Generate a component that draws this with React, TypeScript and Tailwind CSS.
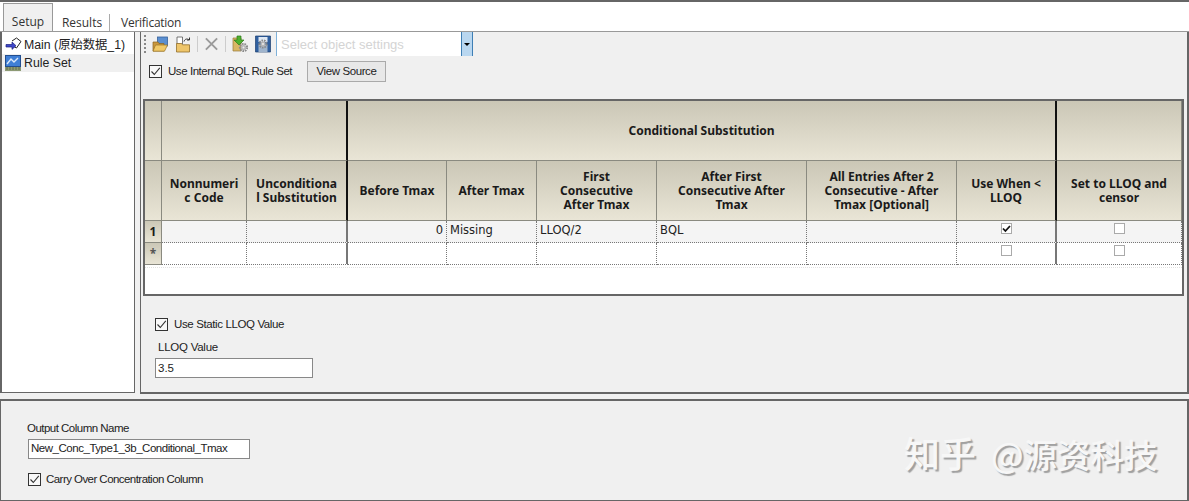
import type { ReactNode } from 'react';

const ui = "font-['Liberation_Sans','Noto_Sans_CJK_SC',sans-serif]";

function Check({ checked = true }: { checked?: boolean }) {
  return (
    <span className="flex h-[13px] w-[13px] shrink-0 items-center justify-center border border-[#333] bg-[#f8f8f8]">
      {checked && (
        <svg width="11" height="11" viewBox="0 0 11 11" fill="none">
          <path d="M1.5 5.5 4.3 8.5 9.8 1.8" stroke="#333" strokeWidth="1.1" />
        </svg>
      )}
    </span>
  );
}

function GridCheck({ checked = false }: { checked?: boolean }) {
  return (
    <span className="flex h-[11px] w-[11px] items-center justify-center border border-[#aaa] bg-white">
      {checked && (
        <svg width="9" height="9" viewBox="0 0 9 9" fill="none">
          <path d="M1 4.5 3.4 7 8 2" stroke="#111" strokeWidth="1.8" />
        </svg>
      )}
    </span>
  );
}

function FolderOpen() {
  return (
    <svg width="16" height="17" viewBox="0 0 16 17">
      <rect x="5.5" y="1" width="10" height="9" fill="#5b8fd0" stroke="#35609c" strokeWidth="0.8" />
      <path d="M1 6h5l1 1.5h5V15H1z" fill="#c9973f" stroke="#8a6420" strokeWidth="0.7" />
      <path d="M3.5 9H15.5l-3 6.2H1z" fill="#f0c968" stroke="#9a7226" strokeWidth="0.7" />
    </svg>
  );
}

function CopyFolder() {
  return (
    <svg width="16" height="17" viewBox="0 0 16 17">
      <path d="M2 1h5.5v7H2z" fill="#fff" stroke="#555" strokeWidth="0.8" />
      <path d="M1.5 7.5h5l1 1.3h7V16h-13z" fill="#eec56a" stroke="#93702c" strokeWidth="0.8" />
      <path d="M9 5.5c.8-2.5 3-3.2 5-1.7M14.5 1.5V4H12" fill="none" stroke="#333" strokeWidth="1" />
    </svg>
  );
}

function Gear({ x, y }: { x: number; y: number }) {
  return (
    <g transform={`translate(${x} ${y})`}>
      <circle r="3.6" fill="none" stroke="#8a8a8a" strokeWidth="2" strokeDasharray="1.6 0.9" />
      <circle r="2.6" fill="#b5b5b5" />
      <circle r="1" fill="#eee" />
    </g>
  );
}

function AddSetting() {
  return (
    <svg width="16" height="18" viewBox="0 0 16 18">
      <path d="M1 3h8v13H1z" fill="#d9b765" stroke="#98793a" strokeWidth="0.7" />
      <path d="M5 1h4v4h3l-5 5-5-5h3z" fill="#4fb12f" stroke="#2d7a17" strokeWidth="0.7" />
      <Gear x={11.5} y={12.5} />
    </svg>
  );
}

function SaveSetting() {
  return (
    <svg width="16" height="18" viewBox="0 0 16 18">
      <path d="M.5 1h15v16H.5z" fill="#2f5f9f" stroke="#1d3f70" strokeWidth="0.7" />
      <rect x="3.5" y="2" width="9" height="5" fill="#dfe8f3" />
      <rect x="3.5" y="10" width="9" height="7" fill="#9fb4cc" />
      <Gear x={8} y={9} />
    </svg>
  );
}

function MainIcon() {
  return (
    <svg width="17" height="16" viewBox="0 0 17 16" fill="none">
      <path d="M7 4 11.5 1 16 4.5 11.5 11 8 9" fill="#fff" stroke="#222" strokeWidth="1" />
      <path d="M1 7.5h6V5l4 3.7-4 3.7V10H1z" fill="#3d47c9" stroke="#1c2180" strokeWidth="0.7" />
    </svg>
  );
}

function RuleSetIcon() {
  return (
    <svg width="16" height="16" viewBox="0 0 16 16">
      <rect x="0.5" y="0.5" width="15" height="11" fill="#3f7fd6" stroke="#234e8f" />
      <path d="M2 9 6 4l3 3 4-4" fill="none" stroke="#dbe9fb" strokeWidth="1.4" />
      <rect x="0" y="12" width="16" height="4" fill="#8d9a74" />
      <path d="M2 12v3M5 12v3M8 12v3M11 12v3M14 12v3" stroke="#556044" strokeWidth="0.8" />
    </svg>
  );
}

function Head({ children, className = '' }: { children?: ReactNode; className?: string }) {
  return (
    <div className={`flex items-center justify-center border-b border-r border-[#8a8a80] bg-gradient-to-b from-[#cbc7b6] to-[#e9e5d6] text-center font-['Noto_Sans',sans-serif] text-[12px] leading-[14px] font-bold whitespace-nowrap text-[#1a1a1a] ${className}`}>
      {children}
    </div>
  );
}

function Cell({ children, className = '' }: { children?: ReactNode; className?: string }) {
  return (
    <div className={`flex items-center border-b border-r border-dotted border-b-[#777] border-r-[#777] px-[3px] pb-px text-[11.5px] text-[#222] ${className}`}>
      {children}
    </div>
  );
}

const thick = 'border-r-2 border-r-[#111] [border-right-style:solid]';
const checkCell = 'items-start justify-center pt-[2px]';

export default function App() {
  return (
    <div className={`${ui} relative flex h-[501px] w-[1189px] flex-col overflow-hidden bg-[#f0f0f0] text-[11.5px] text-[#222]`}>
      {/* tab strip */}
      <div className="flex h-[32px] shrink-0 items-end border-t-2 border-b border-t-[#666] border-b-[#999] bg-white pl-[3px] font-['Open_Sans','Liberation_Sans',sans-serif] text-[12px] text-[#333]">
        <div className="flex h-[28px] w-[50px] items-end justify-center border border-b-0 border-[#999] bg-[#f0f0f0]">Setup</div>
        <div className="flex h-[17px] w-[57px] items-center justify-center border-r border-[#aaa] pl-[2px]">Results</div>
        <div className="flex h-[17px] items-center pl-[11px] tracking-[-0.25px]">Verification</div>
      </div>

      {/* middle */}
      <div className="flex h-[362px] shrink-0">
        <div className="h-[361px] w-[135px] shrink-0 border-l-2 border-r border-b border-[#666] bg-white pt-[4px] text-[12.3px]">
          <div className="flex h-[18px] items-center gap-[2px] pl-[3px] whitespace-nowrap">
            <MainIcon />
            <span>Main (原始数据_1)</span>
          </div>
          <div className="flex h-[18px] items-center gap-[3px] bg-[#f0f0f0] pl-[3px]">
            <RuleSetIcon />
            <span>Rule Set</span>
          </div>
        </div>

        <div className="ml-[5px] flex h-[362px] flex-1 flex-col border-l border-b-2 border-r-2 border-[#666]">
          {/* toolbar */}
          <div className="flex h-[24px] shrink-0 items-center pl-[3px]">
            <span className="mr-[6px] h-[18px] border-l-2 border-dotted border-[#888]" />
            <FolderOpen />
            <span className="w-[7px]" />
            <CopyFolder />
            <span className="mx-[6px] h-[16px] border-l border-[#ccc]" />
            <svg width="15" height="16" viewBox="0 0 16 16">
              <path d="M2 2 14 14M14 2 2 14" stroke="#9a9a9a" strokeWidth="2" />
            </svg>
            <span className="mx-[6px] h-[16px] border-l border-[#ccc]" />
            <AddSetting />
            <span className="w-[7px]" />
            <SaveSetting />
            <div className="ml-[5px] flex h-[24px] w-[197px] items-center justify-between border-l border-[#7fb1d9] bg-white pl-[4px] text-[13px] text-[#d4d4d4]">
              <span className="pt-[2px]">Select object settings</span>
              <span className="flex h-full w-[12px] items-center justify-center border-x border-[#3f7fb5] bg-[#b9d7f0]">
                <span className="h-0 w-0 border-x-[3px] border-t-[3px] border-x-transparent border-t-black" />
              </span>
            </div>
          </div>

          {/* rule set options */}
          <div className="flex h-[25px] shrink-0 items-center pt-[6px] pl-[8px]">
            <Check />
            <span className="ml-[6px] w-[139px] pt-[1px] tracking-[-0.44px]">Use Internal BQL Rule Set</span>
            <button className="flex h-[21px] w-[79px] items-center justify-center border border-[#aaa] bg-[#e8e8e8] tracking-[-0.4px]">View Source</button>
          </div>

          {/* table */}
          <div className="mx-[2px] mt-[18px] flex h-[197px] w-[1041px] shrink-0 flex-col border-2 border-[#666] bg-white font-['DejaVu_Sans',sans-serif]">
            <div className="grid grid-cols-[17px_85px_101px_99px_90px_120px_150px_150px_100px_125px] grid-rows-[60px_60px_22px_22px]">
              <Head />
              <Head className={`col-span-2 ${thick}`} />
              <Head className={`col-span-6 ${thick}`}>Conditional Substitution</Head>
              <Head />

              <Head />
              <Head>Nonnumeri<br />c Code</Head>
              <Head className={thick}>Unconditiona<br />l Substitution</Head>
              <Head>Before Tmax</Head>
              <Head>After Tmax</Head>
              <Head>First<br />Consecutive<br />After Tmax</Head>
              <Head>After First<br />Consecutive After<br />Tmax</Head>
              <Head>All Entries After 2<br />Consecutive - After<br />Tmax [Optional]</Head>
              <Head className={thick}>Use When &lt;<br />LLOQ</Head>
              <Head>Set to LLOQ and<br />censor</Head>

              <Head className="text-[12px]">1</Head>
              <Cell className="bg-[#f4f4f4]" />
              <Cell className={`bg-[#f4f4f4] ${thick}`} />
              <Cell className="justify-end bg-[#f4f4f4]">0</Cell>
              <Cell className="bg-[#f4f4f4]">Missing</Cell>
              <Cell className="bg-[#f4f4f4]">LLOQ/2</Cell>
              <Cell className="bg-[#f4f4f4]">BQL</Cell>
              <Cell className="bg-[#f4f4f4]" />
              <Cell className={`bg-[#f4f4f4] ${checkCell} ${thick}`}><GridCheck checked /></Cell>
              <Cell className={`bg-[#f4f4f4] ${checkCell}`}><GridCheck /></Cell>

              <Head className="text-[#555]">*</Head>
              <Cell />
              <Cell className={thick} />
              <Cell />
              <Cell />
              <Cell />
              <Cell />
              <Cell />
              <Cell className={`${checkCell} ${thick}`}><GridCheck /></Cell>
              <Cell className={checkCell}><GridCheck /></Cell>
            </div>
            <div className="mt-[2px] border-t border-dotted border-[#e2e2e2]" />
          </div>

          {/* LLOQ */}
          <div className="flex items-center pt-[20px] pl-[14px]">
            <Check />
            <span className="ml-[6px] tracking-[-0.38px]">Use Static LLOQ Value</span>
          </div>
          <div className="mt-[7px] pl-[17px] leading-[14px] tracking-[-0.25px]">LLOQ Value</div>
          <div className="mt-[4px] ml-[14px] flex h-[20px] w-[158px] items-center border border-[#888] bg-white pl-[2px]">3.5</div>
        </div>
      </div>

      {/* output column panel */}
      <div className="mt-[5px] h-[102px] shrink-0 border-t-2 border-r-2 border-b border-l border-[#666] pt-[20px] pl-[27px]">
        <div className="-ml-px leading-[14px] tracking-[-0.52px]">Output Column Name</div>
        <div className="mt-[4px] flex h-[20px] w-[222px] items-center border border-[#888] bg-white pl-[2px] tracking-[-0.47px]">New_Conc_Type1_3b_Conditional_Tmax</div>
        <div className="mt-[12px] flex items-center">
          <Check />
          <span className="ml-[5px] tracking-[-0.55px]">Carry Over Concentration Column</span>
        </div>
      </div>

      {/* watermark */}
      <div className="absolute top-[428px] left-[904px] font-['Noto_Sans_CJK_SC',sans-serif] leading-[48px] font-medium whitespace-nowrap text-[#f7f7f7] [text-shadow:2px_2px_1px_#a0a0a0]">
        <span className="text-[36px]">知乎</span>
        <span className="ml-[15px] text-[33.5px]">@源资科技</span>
      </div>
    </div>
  );
}
